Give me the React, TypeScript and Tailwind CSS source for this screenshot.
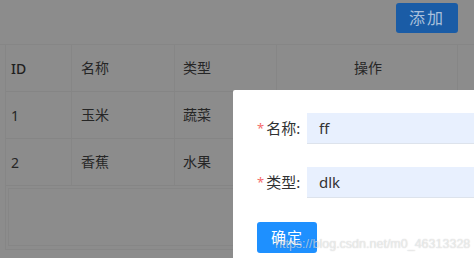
const rows = [
    { id: 1, name: '玉米', type: '蔬菜' },
    { id: 2, name: '香蕉', type: '水果' },
];

const font = 'font-["Noto_Sans","Noto_Sans_CJK_SC",sans-serif]';

export default function App() {
    return (
        <div className={`relative h-[258px] w-[474px] overflow-hidden bg-[#8c8c8c] ${font}`}>
            {/* page behind the mask */}
            <div className="flex h-[45px] items-start justify-end border-b border-[#868686] pr-[16px] pt-[3px]">
                <button className="h-[30px] w-[62px] rounded-[3px] bg-[#1a5ca6] text-[16px] tracking-[2px] text-[#a9c0dc]">
                    添加
                </button>
            </div>

            <div className="ml-[5px] w-[453px] border-l border-r border-[#868686] text-[14px] text-[#262626]">
                <div className="grid h-[47px] grid-cols-[65px_103px_102px_183px] items-center border-b border-[#858585]">
                    <div className="pl-[5px] font-medium text-[#1f1f1f]">ID</div>
                    <div className="h-full border-l border-[#868686] pl-[9px] leading-[46px]">名称</div>
                    <div className="h-full border-l border-[#868686] pl-[8px] leading-[46px]">类型</div>
                    <div className="h-full border-l border-[#868686] text-center leading-[46px]">操作</div>
                </div>
                {rows.map((r) => (
                    <div
                        key={r.id}
                        className="grid h-[47px] grid-cols-[65px_103px_102px_183px] items-center border-b border-[#858585]"
                    >
                        <div className="pl-[5px]">{r.id}</div>
                        <div className="h-full border-l border-[#868686] pl-[9px] leading-[46px]">{r.name}</div>
                        <div className="h-full border-l border-[#868686] pl-[8px] leading-[46px]">{r.type}</div>
                        <div className="h-full border-l border-[#868686]"></div>
                    </div>
                ))}
                <div className="ml-[2px] mt-[2px] h-[58px] border-b border-l border-t border-[#868686]"></div>
                <div className="h-[4px] border-b border-[#868686]"></div>
            </div>

            {/* dialog */}
            <div className="absolute left-[233px] top-[90px] h-[200px] w-[260px] rounded-[2px] bg-white pl-[24px] pt-[23px] text-[15px]">
                <div className="flex h-[31px] items-center">
                    <label className="flex w-[50px] items-center text-[#303133]">
                        <span className="mr-[2px] text-[13px] text-[#f56c6c]">*</span>
                        名称:
                    </label>
                    <div className="flex h-[31px] flex-1 items-center border-b border-[#dde3ec] bg-[#e8f0fe] pl-[12px] text-[#333]">
                        ff
                    </div>
                </div>
                <div className="mt-[23px] flex h-[31px] items-center">
                    <label className="flex w-[50px] items-center text-[#303133]">
                        <span className="mr-[2px] text-[13px] text-[#f56c6c]">*</span>
                        类型:
                    </label>
                    <div className="flex h-[31px] flex-1 items-center border-b border-[#dde3ec] bg-[#e8f0fe] pl-[12px] text-[#333]">
                        dlk
                    </div>
                </div>
                <button className="mt-[24px] h-[31px] w-[60px] rounded-[3px] bg-[#1e90ff] text-[15px] tracking-[1px] text-white">
                    确定
                </button>
            </div>

            {/* watermark */}
            <div className="absolute left-[275px] top-[235px] font-['Liberation_Sans',sans-serif] text-[12.5px] text-white/60 [text-shadow:0_0_1px_rgba(0,0,0,0.25)]">
                https://blog.csdn.net/m0_46313328
            </div>
        </div>
    );
}
